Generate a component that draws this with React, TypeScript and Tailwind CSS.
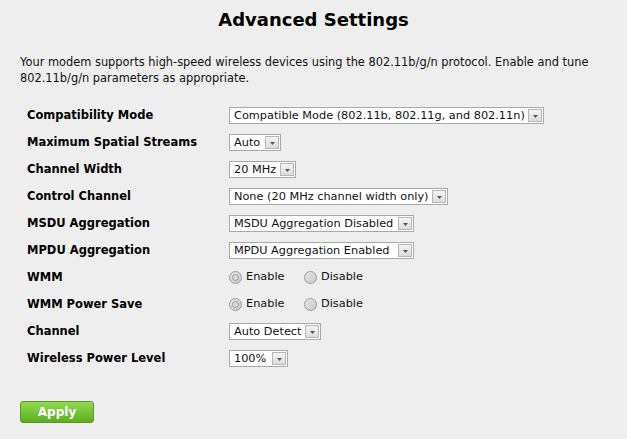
import React from 'react'

const FONT = { fontFamily: '"DejaVu Sans", Verdana, sans-serif' }

function Select({ value, width }: { value: string; width: string }) {
  return (
    <div className={`inline-flex items-center h-[17px] border border-[#a9a9a9] bg-white ${width}`}>
      <span className="flex-1 pl-[4px] text-[11.3px] leading-none text-[#111] whitespace-nowrap">{value}</span>
      <span className="w-[14px] h-[13px] mr-[1px] border border-[#b5b5b5] bg-gradient-to-b from-[#f4f4f4] to-[#dcdcdc] flex items-end justify-center pb-[3px]">
        <svg width="5" height="3" viewBox="0 0 5 3">
          <path d="M0 0h5L2.5 3z" fill="#555" />
        </svg>
      </span>
    </div>
  )
}

function Radio({ checked }: { checked?: boolean }) {
  return (
    <span className="w-[13px] h-[13px] rounded-full border border-[#9a9a9a] bg-gradient-to-br from-[#e8e8e8] to-[#c8c8c8] flex items-center justify-center">
      {checked && <span className="w-[7px] h-[7px] rounded-full border border-[#9a9a9a] bg-[#d9d9d9]" />}
    </span>
  )
}

function RadioPair() {
  return (
    <div className="flex items-center text-[11.3px] text-[#111]">
      <Radio checked />
      <span className="ml-[4px] w-[58px]">Enable</span>
      <Radio />
      <span className="ml-[4px]">Disable</span>
    </div>
  )
}

const ROWS: { label: string; control: React.ReactNode }[] = [
  { label: 'Compatibility Mode', control: <Select value="Compatible Mode (802.11b, 802.11g, and 802.11n)" width="w-[315px]" /> },
  { label: 'Maximum Spatial Streams', control: <Select value="Auto" width="w-[52px]" /> },
  { label: 'Channel Width', control: <Select value="20 MHz" width="w-[67px]" /> },
  { label: 'Control Channel', control: <Select value="None (20 MHz channel width only)" width="w-[219px]" /> },
  { label: 'MSDU Aggregation', control: <Select value="MSDU Aggregation Disabled" width="w-[185px]" /> },
  { label: 'MPDU Aggregation', control: <Select value="MPDU Aggregation Enabled" width="w-[185px]" /> },
  { label: 'WMM', control: <RadioPair /> },
  { label: 'WMM Power Save', control: <RadioPair /> },
  { label: 'Channel', control: <Select value="Auto Detect" width="w-[92px]" /> },
  { label: 'Wireless Power Level', control: <Select value="100%" width="w-[59px]" /> },
]

export default function App() {
  return (
    <div className="w-[627px] h-[439px] bg-[#eeeeee] overflow-hidden text-[#111]" style={FONT}>
      <h1 className="pt-[8px] text-center text-[18px] font-bold leading-[24px] text-black">Advanced Settings</h1>

      <p className="mt-[22px] pl-[20px] pr-[20px] text-[11.4px] leading-[16px] text-[#111]">
        Your modem supports high-speed wireless devices using the 802.11b/g/n protocol. Enable and tune 802.11b/g/n parameters as appropriate.
      </p>

      <div className="mt-[16px] pl-[27px]">
        {ROWS.map((r) => (
          <div key={r.label} className="flex items-center h-[27px]">
            <div className="w-[202px] text-[11.5px] font-bold text-black">{r.label}</div>
            {r.control}
          </div>
        ))}
      </div>

      <div className="flex pl-[20px] mt-[29px]">
        <button className="w-[74px] h-[22px] rounded-[3px] border border-[#5c9a26] bg-gradient-to-b from-[#92da4f] to-[#5cae1c] text-white text-[12px] leading-none font-bold">
          Apply
        </button>
      </div>
    </div>
  )
}
